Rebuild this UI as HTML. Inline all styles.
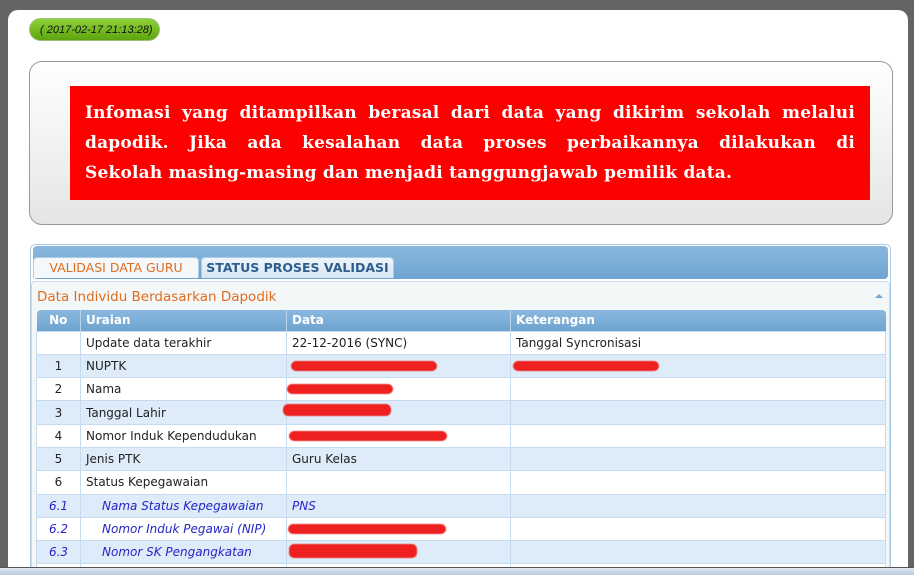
<!DOCTYPE html>
<html><head><meta charset="utf-8"><style>
*{margin:0;padding:0;box-sizing:border-box}
html,body{width:914px;height:575px;overflow:hidden}
body{background:#646464;font-family:"DejaVu Sans","Liberation Sans",sans-serif;position:relative}
.panel{position:absolute;left:8px;top:10px;width:900px;height:565px;background:#fff;border-radius:10px 10px 0 0}
.time{position:absolute;left:29px;top:18px;width:131px;height:23px;border-radius:12px;background:linear-gradient(#8ed23a,#5ea410);border:1px solid #9bc27a;font:italic 11px "Liberation Sans",sans-serif;color:#111;line-height:22px;padding-left:10px}
.info{position:absolute;left:29px;top:61px;width:864px;height:164px;border:1px solid #999;border-radius:13px;background:linear-gradient(#fff,#e4e5e5)}
.red{position:absolute;left:40px;top:24px;width:800px;height:114px;background:#fd0000;color:#fff;font:bold 17px/30px "DejaVu Serif","Liberation Serif",serif;padding:12px 15px 0 15px;letter-spacing:0.2px}
.red span{display:block;white-space:nowrap}
.red span.j{text-align:justify;text-align-last:justify}
.tabs{position:absolute;left:30px;top:244px;width:861px;height:340px;border:1px solid #a9cbe6;border-radius:5px;background:#fff}
.thead{position:absolute;left:2px;top:1px;width:855px;height:33px;border-radius:4px;background:linear-gradient(#8ab8de,#6ea4d0)}
.tab{position:absolute;top:12px;height:21px;border:1px solid #a9cbe6;border-bottom:none;border-radius:4px 4px 0 0;font-size:12.5px;line-height:20px;text-align:center}
.t1{left:2px;width:166px;background:#f5f8fa;color:#e06c1e}
.t2{left:170px;width:193px;background:linear-gradient(#eef5fb,#d7e6f4);color:#2e5e8e;font-weight:bold}
.cont{position:absolute;left:0px;top:36px;width:859px;height:300px;border:1px solid #c8dcee;border-radius:4px;background:#f4f7f8}
.ttl{position:absolute;left:5px;top:7px;font-size:13.5px;color:#e06c1e}
.arr{position:absolute;right:6px;top:12px;width:0;height:0;border-left:4px solid transparent;border-right:4px solid transparent;border-bottom:4px solid #7aa6cc}
table{position:absolute;left:4px;top:28px;width:850px;border-collapse:collapse;font-size:12px;color:#222}
th{height:21px;background:linear-gradient(#8ab8de,#6ea4d0);color:#fff;text-align:left;padding-left:5px;font-weight:bold;border-left:1px solid #b8d4ec}
th:first-child{border-radius:4px 0 0 0;text-align:center;padding:0;border-left:none}
th:last-child{border-radius:0 4px 0 0}
td{height:23.3px;border:1px solid #c5dcf0;padding-left:5px;white-space:nowrap;position:relative}
td:first-child{text-align:center;padding:0}
tr.b td{background:#deecf9}
tr.w td{background:#fff}
tr.i td{color:#2424c8;font-style:italic}
.red-s{position:absolute;top:6px;height:10px;background:#ee2020;border-radius:5px;filter:blur(.6px)}
.task{position:absolute;left:0;top:567px;width:914px;height:8px;background:linear-gradient(#dfe9f3,#b5c8da);border-top:1px solid #555}
</style></head><body>
<div class="panel"></div>
<div class="time">( 2017-02-17 21:13:28)</div>
<div class="info"><div class="red"><span class="j">Infomasi yang ditampilkan berasal dari data yang dikirim sekolah melalui</span><span class="j">dapodik. Jika ada kesalahan data proses perbaikannya dilakukan di</span><span>Sekolah masing-masing dan menjadi tanggungjawab pemilik data.</span></div></div>
<div class="tabs">
<div class="thead"></div>
<div class="tab t1">VALIDASI DATA GURU</div>
<div class="tab t2">STATUS PROSES VALIDASI</div>
<div class="cont"><div class="ttl">Data Individu Berdasarkan Dapodik</div><div class="arr"></div>
<table>
<colgroup><col style="width:44px"><col style="width:206px"><col style="width:224px"><col></colgroup>
<tr><th>No</th><th>Uraian</th><th>Data</th><th>Keterangan</th></tr>
<tr class="w"><td></td><td>Update data terakhir</td><td>22-12-2016 (SYNC)</td><td>Tanggal Syncronisasi</td></tr>
<tr class="b"><td>1</td><td>NUPTK</td><td><div class="red-s" style="left:4px;width:146px"></div></td><td><div class="red-s" style="left:2px;width:146px"></div></td></tr>
<tr class="w"><td>2</td><td>Nama</td><td><div class="red-s" style="left:0;width:106px"></div></td><td></td></tr>
<tr class="b"><td>3</td><td>Tanggal Lahir</td><td><div class="red-s" style="left:-4px;width:108px;height:12px;top:3px"></div></td><td></td></tr>
<tr class="w"><td>4</td><td>Nomor Induk Kependudukan</td><td><div class="red-s" style="left:2px;width:158px"></div></td><td></td></tr>
<tr class="b"><td>5</td><td>Jenis PTK</td><td>Guru Kelas</td><td></td></tr>
<tr class="w"><td>6</td><td>Status Kepegawaian</td><td></td><td></td></tr>
<tr class="b i"><td>6.1</td><td style="padding-left:21px">Nama Status Kepegawaian</td><td>PNS</td><td></td></tr>
<tr class="w i"><td>6.2</td><td style="padding-left:21px">Nomor Induk Pegawai (NIP)</td><td><div class="red-s" style="left:1px;width:158px"></div></td><td></td></tr>
<tr class="b i"><td>6.3</td><td style="padding-left:21px">Nomor SK Pengangkatan</td><td><div class="red-s" style="left:2px;width:128px;height:14px;top:3px"></div></td><td></td></tr>
<tr class="w"><td></td><td></td><td></td><td></td></tr>
</table></div></div>
<div class="task"></div>
</body></html>
